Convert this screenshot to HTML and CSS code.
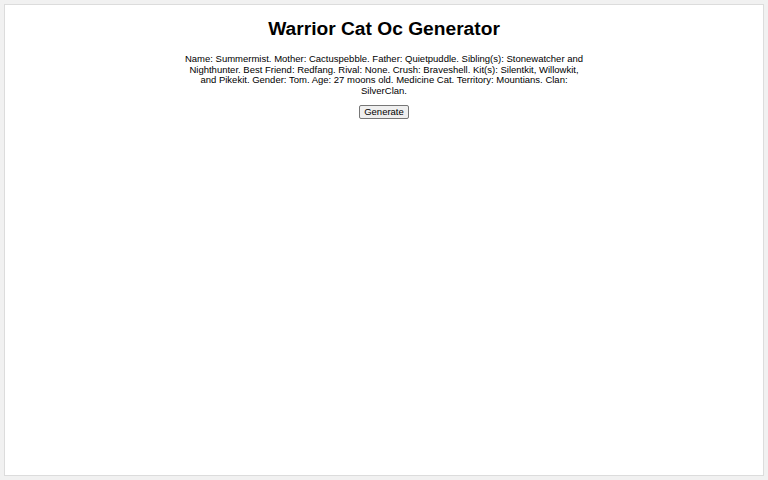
FILE: index.html
```html
<!DOCTYPE html>
<html lang="en">
<head>
<meta charset="utf-8">
<title>Warrior Cat Oc Generator</title>
<link rel="stylesheet" href="styles.css">
</head>
<body>
<main class="page">
  <h1 class="title">Warrior Cat Oc Generator</h1>
  <p class="result">Name: Summermist. Mother: Cactuspebble. Father: Quietpuddle. Sibling(s): Stonewatcher and Nighthunter. Best Friend: Redfang. Rival: None. Crush: Braveshell. Kit(s): Silentkit, Willowkit, and Pikekit. Gender: Tom. Age: 27 moons old. Medicine Cat. Territory: Mountians. Clan: SilverClan.</p>
  <button class="generate" type="button">Generate</button>
</main>
</body>
</html>
```
FILE: styles.css
```css
html, body {
  margin: 0;
  height: 100%;
}

body {
  background: #f1f1f1;
  padding: 4px;
  box-sizing: border-box;
  font-family: "Liberation Sans", Arial, sans-serif;
  color: #000;
}

.page {
  box-sizing: border-box;
  height: 100%;
  background: #fff;
  border: 1px solid #dcdcdc;
  display: flex;
  flex-direction: column;
  align-items: center;
  padding-top: 13px;
}

.title {
  margin: 0;
  font-size: 19.2px;
  font-weight: bold;
  line-height: 22px;
}

.result {
  margin: 14px 0 0;
  max-width: 402px;
  font-size: 9.5px;
  line-height: 10.6px;
  text-align: center;
}

.generate {
  margin-top: 9px;
  font-family: "Liberation Sans", Arial, sans-serif;
  font-size: 9.5px;
  line-height: 12px;
  padding: 0 4px;
  background: #efefef;
  border: 1px solid #767676;
  border-radius: 2px;
  color: #000;
}
```
